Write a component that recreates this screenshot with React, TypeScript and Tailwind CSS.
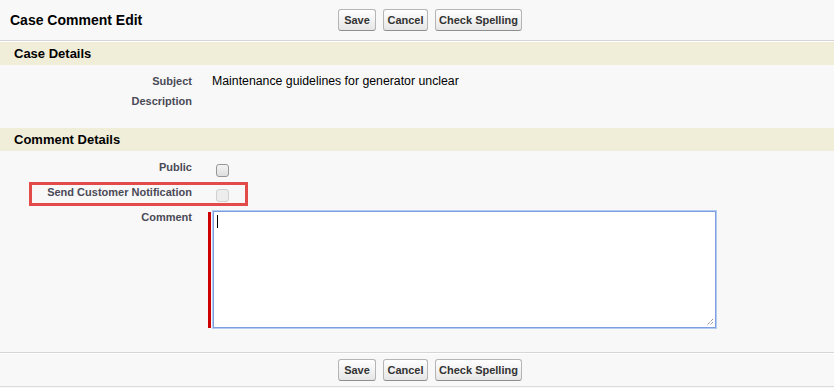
import React from 'react';

const FONT = { fontFamily: '"Liberation Sans", Arial, sans-serif' };

const Btn: React.FC<{ label: string; w: string }> = ({ label, w }) => (
  <button
    className={`${w} h-[22px] rounded-[3px] border border-[#b5b5b5] border-b-[#8f8f8f] bg-gradient-to-b from-white to-[#e6e6e6] text-[11px] font-bold text-[#333] leading-none`}
  >
    {label}
  </button>
);

const ButtonRow: React.FC<{ children?: React.ReactNode }> = ({ children }) => (
  <div className="flex items-center">
    <div className="w-[338px] pl-[10px]">{children}</div>
    <div className="flex gap-[7px]">
      <Btn label="Save" w="w-[38px]" />
      <Btn label="Cancel" w="w-[45px]" />
      <Btn label="Check Spelling" w="w-[87px]" />
    </div>
  </div>
);

const Subheader: React.FC<{ title: string }> = ({ title }) => (
  <div className="h-[23px] bg-[#f0eed9] flex items-center pl-[14px]">
    <h3 className="text-[13px] font-bold text-black">{title}</h3>
  </div>
);

const Label: React.FC<{ text: string }> = ({ text }) => (
  <div className="w-[192px] shrink-0 text-right text-[11px] font-bold leading-[16px] text-[#4a4a56]">{text}</div>
);

const Checkbox: React.FC<{ disabled?: boolean }> = ({ disabled }) => (
  <span
    className={`block w-[13px] h-[13px] rounded-[3px] border ${
      disabled ? 'border-[#d0d0d0] bg-[#ededed]' : 'border-[#969696] bg-gradient-to-b from-[#f4f4f4] to-[#dedede]'
    }`}
  />
);

export default function App() {
  return (
    <div className="relative w-[834px] h-[388px] bg-[#f8f8f8] overflow-hidden" style={FONT}>
      <div className="h-[40px] flex items-center">
        <ButtonRow>
          <h2 className="text-[14px] font-bold text-black">Case Comment Edit</h2>
        </ButtonRow>
      </div>
      <div className="h-px bg-[#d4d4d4]" />
      <div className="h-px bg-white" />

      <Subheader title="Case Details" />
      <div className="h-[63px] pt-[8px] flex flex-col gap-[4px]">
        <div className="flex items-center gap-[20px]">
          <Label text="Subject" />
          <span className="text-[12.3px] leading-[16px] text-black">Maintenance guidelines for generator unclear</span>
        </div>
        <div className="flex items-center gap-[20px]">
          <Label text="Description" />
        </div>
      </div>

      <Subheader title="Comment Details" />
      <div className="h-[201px] pt-[8px] flex flex-col">
        <div className="h-[25px] flex items-start gap-[24px]">
          <Label text="Public" />
          <div className="mt-[5px]">
            <Checkbox />
          </div>
        </div>
        <div className="h-[25px] flex items-start gap-[24px]">
          <Label text="Send Customer Notification" />
          <div className="mt-[5px]">
            <Checkbox disabled />
          </div>
        </div>
        <div className="flex items-start gap-[16px]">
          <Label text="Comment" />
          <div className="mt-[2px] flex">
            <div className="w-[3px] mt-[1px] h-[116px] bg-[#cc0000]" />
            <div className="relative ml-[2px] w-[503px] h-[117px] bg-white border border-[#7d9fe0] shadow-[0_0_0_1px_#b4cbf2] pt-[3px] pl-[3px]">
              <div className="w-px h-[13px] bg-black" />
              <svg className="absolute right-[1px] bottom-[1px]" width="9" height="9" viewBox="0 0 9 9">
                <path d="M8 2 L2 8 M8 5 L5 8" stroke="#666" strokeWidth="1" strokeDasharray="1 1" fill="none" />
              </svg>
            </div>
          </div>
        </div>
      </div>

      <div className="h-px bg-[#d6d6d6]" />
      <div className="h-px bg-white" />
      <div className="h-[32px] flex items-center">
        <ButtonRow />
      </div>
      <div className="h-px bg-[#dcdcdc]" />

      <div className="absolute left-[29px] top-[182px] w-[219px] h-[24px] border-[3px] border-[#e34b4b]" />
    </div>
  );
}
